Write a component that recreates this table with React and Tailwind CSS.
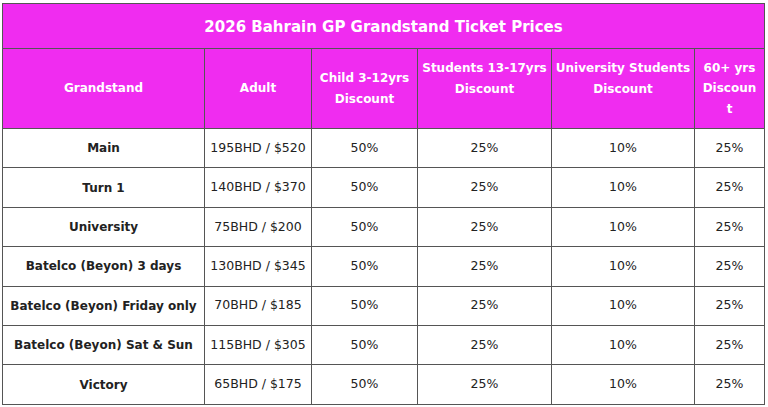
const headers = [
  { label: "Grandstand", extra: "px-[2px]" },
  { label: "Adult", extra: "px-[2px]" },
  { label: "Child 3-12yrs Discount", extra: "px-[2px]" },
  { label: "Students 13-17yrs Discount", extra: "px-[2px] pb-[20px]" },
  { label: "University Students Discount", extra: "px-[2px] pb-[20px]" },
  { label: "60+ yrs Discount", extra: "px-[6px] break-all" },
];

const rows = [
  ["Main", "195BHD / $520"],
  ["Turn 1", "140BHD / $370"],
  ["University", "75BHD / $200"],
  ["Batelco (Beyon) 3 days", "130BHD / $345"],
  ["Batelco (Beyon) Friday only", "70BHD / $185"],
  ["Batelco (Beyon) Sat & Sun", "115BHD / $305"],
  ["Victory", "65BHD / $175"],
];

export default function App() {
  return (
    <div className="bg-white w-[768px] h-[407px] pl-[2px] pt-[3px] font-['DejaVu_Sans',sans-serif]">
      <table className="w-[762px] border-collapse table-fixed border border-[#555]">
        <colgroup>
          <col className="w-[202px]" />
          <col className="w-[107px]" />
          <col className="w-[106px]" />
          <col className="w-[134px]" />
          <col className="w-[143px]" />
          <col className="w-[70px]" />
        </colgroup>
        <thead>
          <tr className="bg-[#f02cf0] text-white h-[45px]">
            <th colSpan={6} className="border border-[#555] pt-[2px] text-[15px] font-bold text-center">
              2026 Bahrain GP Grandstand Ticket Prices
            </th>
          </tr>
          <tr className="bg-[#f02cf0] text-white h-[80px]">
            {headers.map((h, i) => (
              <th
                key={i}
                className={`${h.extra} border border-[#555] text-[12px] leading-[20.5px] font-bold text-center align-middle`}
              >
                {h.label}
              </th>
            ))}
          </tr>
        </thead>
        <tbody>
          {rows.map((row, i) => (
            <tr key={i} className="h-[39.4px] text-[#222] text-[12.5px]">
              <td className="border border-[#555] text-center font-bold text-[12px] whitespace-nowrap">{row[0]}</td>
              <td className="border border-[#555] text-center">{row[1]}</td>
              <td className="border border-[#555] text-center">50%</td>
              <td className="border border-[#555] text-center">25%</td>
              <td className="border border-[#555] text-center">10%</td>
              <td className="border border-[#555] text-center">25%</td>
            </tr>
          ))}
        </tbody>
      </table>
    </div>
  );
}
